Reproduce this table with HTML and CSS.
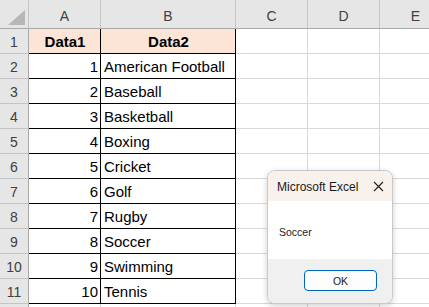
FILE: index.html
```html
<!DOCTYPE html>
<html>
<head>
<meta charset="utf-8">
<link rel="stylesheet" href="styles.css">
</head>
<body>
<div class="viewport">
  <div class="sheet">
    <div class="h corner"><span class="tri"></span></div>
    <div class="h col">A</div>
    <div class="h col">B</div>
    <div class="h col">C</div>
    <div class="h col">D</div>
    <div class="h col">E</div>

    <div class="h rn">1</div>
    <div class="c t a hdr b">Data1</div>
    <div class="c t bb hdr b">Data2</div>
    <div class="c"></div><div class="c"></div><div class="c"></div>

    <div class="h rn">2</div>
    <div class="c t a num">1</div>
    <div class="c t bb txt">American Football</div>
    <div class="c"></div><div class="c"></div><div class="c"></div>

    <div class="h rn">3</div>
    <div class="c t a num">2</div>
    <div class="c t bb txt">Baseball</div>
    <div class="c"></div><div class="c"></div><div class="c"></div>

    <div class="h rn">4</div>
    <div class="c t a num">3</div>
    <div class="c t bb txt">Basketball</div>
    <div class="c"></div><div class="c"></div><div class="c"></div>

    <div class="h rn">5</div>
    <div class="c t a num">4</div>
    <div class="c t bb txt">Boxing</div>
    <div class="c"></div><div class="c"></div><div class="c"></div>

    <div class="h rn">6</div>
    <div class="c t a num">5</div>
    <div class="c t bb txt">Cricket</div>
    <div class="c"></div><div class="c"></div><div class="c"></div>

    <div class="h rn">7</div>
    <div class="c t a num">6</div>
    <div class="c t bb txt">Golf</div>
    <div class="c"></div><div class="c"></div><div class="c"></div>

    <div class="h rn">8</div>
    <div class="c t a num">7</div>
    <div class="c t bb txt">Rugby</div>
    <div class="c"></div><div class="c"></div><div class="c"></div>

    <div class="h rn">9</div>
    <div class="c t a num">8</div>
    <div class="c t bb txt">Soccer</div>
    <div class="c"></div><div class="c"></div><div class="c"></div>

    <div class="h rn">10</div>
    <div class="c t a num">9</div>
    <div class="c t bb txt">Swimming</div>
    <div class="c"></div><div class="c"></div><div class="c"></div>

    <div class="h rn">11</div>
    <div class="c t a num">10</div>
    <div class="c t bb txt">Tennis</div>
    <div class="c"></div><div class="c"></div><div class="c"></div>

    <div class="h rn"></div>
    <div class="c"></div><div class="c"></div>
    <div class="c"></div><div class="c"></div><div class="c"></div>
  </div>

  <div class="dialog">
    <div class="dlg-title">
      <span class="dlg-name">Microsoft Excel</span>
      <svg class="dlg-close" width="11" height="11" viewBox="0 0 11 11">
        <path d="M1 1 L10 10 M10 1 L1 10" stroke="#1f1f1f" stroke-width="1.1" fill="none"/>
      </svg>
    </div>
    <div class="dlg-body">Soccer</div>
    <div class="dlg-foot">
      <div class="dlg-btn">OK</div>
    </div>
  </div>
</div>
</body>
</html>
```
FILE: styles.css
```css
html, body {
  margin: 0;
  padding: 0;
  background: #ffffff;
}
.viewport {
  position: relative;
  width: 429px;
  height: 307px;
  overflow: hidden;
}
.sheet {
  display: grid;
  grid-template-columns: 29px 72px 135px 72px 72px 72px;
  grid-template-rows: 29px repeat(12, 25px);
  width: 452px;
  font-family: "Liberation Sans", Arial, sans-serif;
}
.h {
  background: #e6e6e6;
  box-sizing: border-box;
  border-right: 1px solid #c4c4c4;
  border-bottom: 1px solid #c4c4c4;
  color: #404040;
  font-size: 14px;
  display: flex;
  justify-content: center;
  align-items: flex-end;
  line-height: 16px;
}
.corner {
  position: relative;
  border-bottom-color: #a9a9a9;
}
.tri {
  position: absolute;
  right: 3px;
  bottom: 3px;
  width: 0;
  height: 0;
  border-left: 17px solid transparent;
  border-bottom: 15px solid #b7b7b7;
}
.col {
  padding-bottom: 4px;
  border-bottom-color: #a9a9a9;
}
.rn {
  padding-bottom: 3px;
  border-right-color: #a9a9a9;
}
.c {
  box-sizing: border-box;
  border-right: 1px solid #d9d9d9;
  border-bottom: 1px solid #d9d9d9;
  font-size: 15px;
  line-height: 17px;
  display: flex;
  align-items: flex-end;
  padding: 0 2px 3px 3px;
  color: #000;
  white-space: nowrap;
}
.t {
  border-bottom-color: #000;
}
.a {
  border-right-color: #000;
}
.bb {
  border-right-color: #000;
}
.hdr {
  background: #fce4d6;
  font-weight: bold;
  justify-content: center;
}
.num {
  justify-content: flex-end;
}
.txt {
  justify-content: flex-start;
}

.dialog {
  position: absolute;
  left: 267px;
  top: 170px;
  width: 126px;
  height: 134px;
  box-sizing: border-box;
  border: 1px solid #c9c9c9;
  border-radius: 8px;
  overflow: hidden;
  display: flex;
  flex-direction: column;
  box-shadow: 0 2px 6px rgba(0, 0, 0, 0.18);
  font-family: "Liberation Sans", Arial, sans-serif;
  background: #ffffff;
}
.dlg-title {
  height: 30px;
  background: #f8f1ec;
  display: flex;
  align-items: center;
  justify-content: space-between;
  padding: 0 8px 0 9px;
  box-sizing: border-box;
}
.dlg-name {
  font-size: 12px;
  color: #1a1a1a;
  padding-top: 1px;
}
.dlg-close {
  display: block;
  margin-top: 1px;
}
.dlg-body {
  height: 58px;
  background: #ffffff;
  font-size: 10.5px;
  color: #1a1a1a;
  padding: 25px 0 0 11px;
  box-sizing: border-box;
}
.dlg-foot {
  flex: 1;
  background: #f0f0f0;
  display: flex;
  justify-content: flex-end;
  padding: 11px 15px 0 0;
  box-sizing: border-box;
}
.dlg-btn {
  width: 73px;
  height: 21px;
  box-sizing: border-box;
  border: 1px solid #0067c0;
  border-radius: 4px;
  background: #fdfdfd;
  font-size: 10.5px;
  color: #1a1a1a;
  display: flex;
  align-items: center;
  justify-content: center;
}
```
